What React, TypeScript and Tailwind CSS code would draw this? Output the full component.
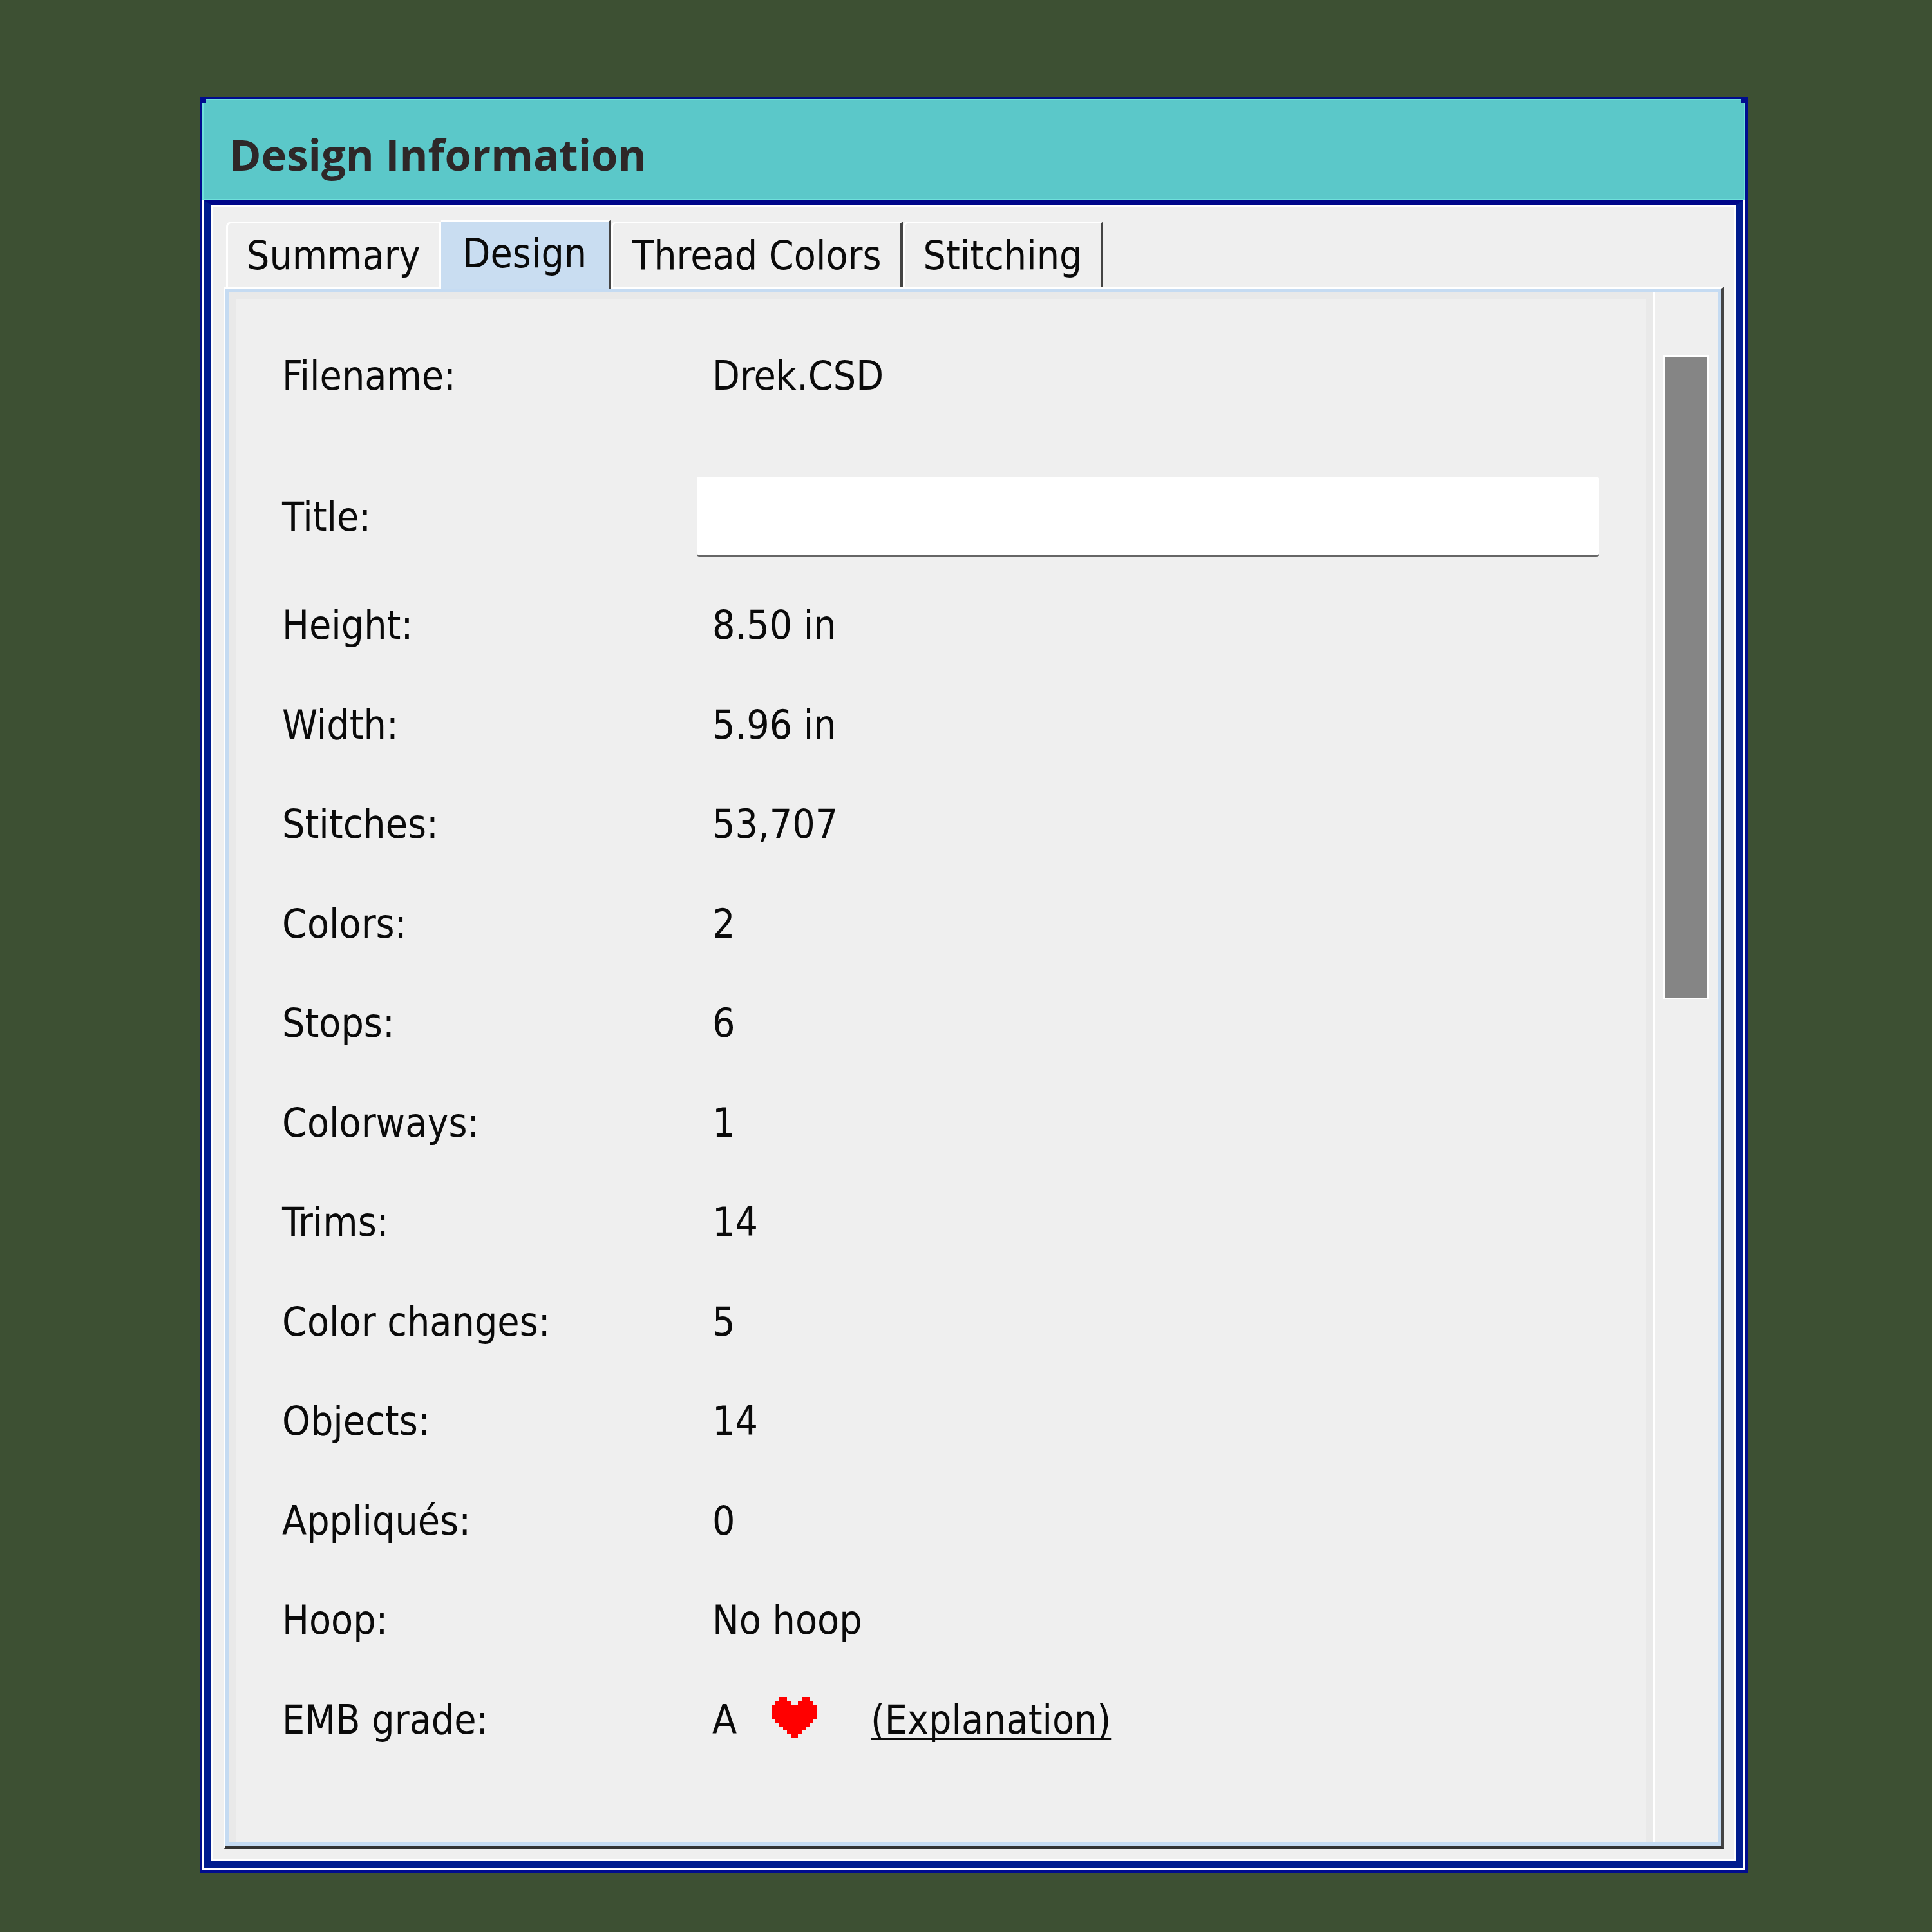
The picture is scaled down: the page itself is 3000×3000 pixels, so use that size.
import { useState } from "react";

const tabs = ["Summary", "Design", "Thread Colors", "Stitching"];

const details: [string, string][] = [
  ["Height:", "8.50 in"],
  ["Width:", "5.96 in"],
  ["Stitches:", "53,707"],
  ["Colors:", "2"],
  ["Stops:", "6"],
  ["Colorways:", "1"],
  ["Trims:", "14"],
  ["Color changes:", "5"],
  ["Objects:", "14"],
  ["Appliqués:", "0"],
  ["Hoop:", "No hoop"],
];

function Heart() {
  return (
    <svg
      className="mb-2 h-16 w-[71px] shrink-0"
      viewBox="0 0 12 11"
      preserveAspectRatio="none"
      shapeRendering="crispEdges"
      aria-hidden="true"
    >
      <path
        fill="#ff0000"
        d="M2 0H4V1H5V2H7V1H8V0H10V1H11V2H12V6H11V7H10V8H9V9H8V10H7V11H5V10H4V9H3V8H2V7H1V6H0V2H1V1H2Z"
      />
    </svg>
  );
}

function Tab({ label, active, onSelect }: { label: string; active: boolean; onSelect: () => void }) {
  return (
    <button
      type="button"
      role="tab"
      aria-selected={active}
      onClick={onSelect}
      className={
        active
          ? "relative z-10 -mb-[3px] h-[107px] border-t-3 border-r-4 border-t-white border-r-[#444444] bg-[#c9ddf1] px-[34px] pb-1 first:border-l-3"
          : "h-[101px] rounded-tl-lg border-t-3 border-r-4 border-l-3 border-t-white border-r-[#444444] border-l-white px-[29px] pt-0.5 first:border-r-3 first:border-r-white"
      }
    >
      {label}
    </button>
  );
}

export default function App() {
  const [active, setActive] = useState("Design");
  const [title, setTitle] = useState("");

  return (
    <main className="flex min-h-screen flex-col bg-[#3d5033] pt-[150px] pr-[286px] pb-[92px] pl-[310px] font-['DejaVu_Sans_Condensed','DejaVu_Sans',sans-serif] text-[62px] leading-[76px] text-[#0a0a0a]">
      <section className="flex flex-1 flex-col border-4 border-[#000c8e] bg-white">
        <header className="relative flex h-[157px] items-center border-2 border-[#6fe0dc] bg-[#5bc8c9] px-10">
          <span className="absolute -top-0.5 -left-0.5 size-1.5 bg-[#000c8e]" />
          <span className="absolute -top-0.5 -right-0.5 size-1.5 bg-[#000c8e]" />
          <h1 className="pt-3 font-['Open_Sans',sans-serif] text-[67px] font-bold text-[#2e2728]">
            Design Information
          </h1>
        </header>

        <div className="mx-[3px] mb-[3px] flex flex-1 flex-col border-x-[11px] border-t-[7px] border-b-[11px] border-[#001c8e] border-t-[#00078a] bg-[#efefef]">
          <div className="flex flex-1 flex-col border-3 border-white pt-5 pr-4 pb-4 pl-[17px]">
            <div role="tablist" className="flex items-end pl-[3px]">
              {tabs.map((t) => (
                <Tab key={t} label={t} active={t === active} onSelect={() => setActive(t)} />
              ))}
            </div>

            <div className="flex flex-1 flex-col border-t-3 border-r-4 border-b-4 border-l-2 border-t-white border-r-[#444444] border-b-[#333333] border-l-white">
              <div className="flex flex-1 border-6 border-[#c5dbf2]">
                <div className="flex flex-1 flex-col border-x-10 border-t-10 border-[#e9e9e9] pt-[43px] pb-[113px] pl-[72px]">
                  <div className="flex h-[154px] items-center">
                    <span className="w-[668px]">Filename:</span>
                    <span>Drek.CSD</span>
                  </div>
                  <div className="mt-[79px] mb-[29px] flex h-[125px] items-center pr-[73px]">
                    <label htmlFor="title" className="w-[644px] shrink-0">
                      Title:
                    </label>
                    <input
                      id="title"
                      type="text"
                      value={title}
                      onChange={(e) => setTitle(e.target.value)}
                      className="h-full min-w-0 flex-1 rounded-sm border-b-3 border-[#666666] bg-white px-6 outline-none"
                    />
                  </div>
                  {details.map(([name, value]) => (
                    <div key={name} className="flex flex-1 items-center">
                      <span className="w-[668px]">{name}</span>
                      <span>{value}</span>
                    </div>
                  ))}
                  <div className="flex flex-1 items-center">
                    <span className="w-[668px]">EMB grade:</span>
                    <span className="w-[92px]">A</span>
                    <Heart />
                    <a
                      href="#explanation"
                      className="ml-[83px] underline decoration-4 underline-offset-6 [text-decoration-skip-ink:none]"
                    >
                      (Explanation)
                    </a>
                  </div>
                </div>
                <div className="w-[101px] border-l-4 border-white pt-[98px] pl-3">
                  <div
                    role="scrollbar"
                    aria-controls="title"
                    aria-valuenow={0}
                    className="box-content h-[994px] w-[66px] border-3 border-white bg-[#858585]"
                  />
                </div>
              </div>
            </div>
          </div>
        </div>
      </section>
    </main>
  );
}
